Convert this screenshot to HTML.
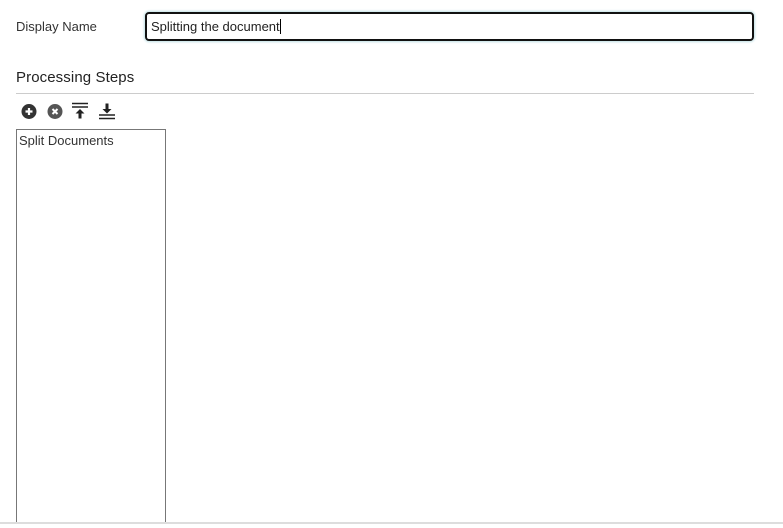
<!DOCTYPE html>
<html><head><style>
body{margin:0;width:783px;height:528px;background:#fff;position:relative;font-family:"Liberation Sans",sans-serif;overflow:hidden}
.a{position:absolute}
</style></head><body>
<div class="a" style="left:16px;top:19px;font-size:13px;color:#333">Display Name</div>
<div class="a" style="left:145px;top:12px;width:605px;height:25px;border:2px solid #111;border-radius:4px;box-shadow:0 0 2px 1px #bfe0e4"></div>
<div class="a" style="left:151px;top:19px;font-size:13px;color:#222">Splitting the document<span style="display:inline-block;width:1px;height:15px;background:#000;vertical-align:-3px"></span></div>
<div class="a" style="left:16px;top:69px;font-size:15px;color:#222;font-weight:500;letter-spacing:0.1px">Processing Steps</div>
<div class="a" style="left:16px;top:93px;width:738px;height:1px;background:#ccc"></div>
<svg class="a" style="left:16px;top:102px" width="104" height="18" viewBox="0 0 104 18">
<circle cx="13" cy="9.5" r="7.5" fill="#333"/><path d="M13 6v7M9.5 9.5h7" stroke="#fff" stroke-width="2.2"/>
<circle cx="39" cy="9.5" r="7.5" fill="#555"/><path d="M36.5 7l5 5M41.5 7l-5 5" stroke="#fff" stroke-width="2"/>
<path d="M56 1.5h16M56 5h16" stroke="#222" stroke-width="1.6"/><path d="M64 7l-4.5 4.5h3v5h3v-5h3z" fill="#222"/>
<path d="M83 13h16M83 16.5h16" stroke="#222" stroke-width="1.6"/><path d="M91 11.5l-4.5-4.5h3V1.5h3V7h3z" fill="#222"/>
</svg>
<div class="a" style="left:16px;top:129px;width:148px;height:394px;border:1px solid #777;border-bottom:none"></div>
<div class="a" style="left:19px;top:133px;font-size:13px;color:#333">Split Documents</div>
<div class="a" style="left:0;top:522px;width:783px;height:2px;background:#ddd"></div>
</body></html>
